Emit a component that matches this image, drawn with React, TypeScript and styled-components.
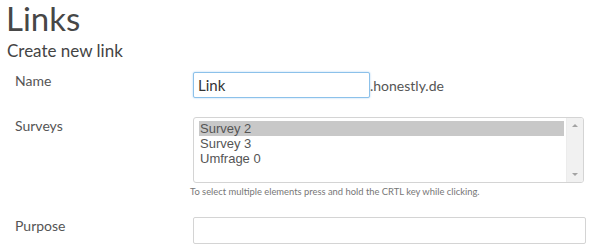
import styled, { createGlobalStyle } from 'styled-components';

const GlobalStyle = createGlobalStyle`
  html, body {
    margin: 0;
    padding: 0;
    background: #ffffff;
  }
  body {
    font-family: Lato, 'Open Sans', sans-serif;
    color: #555555;
  }
`;

const surveys = [
  { id: 2, name: 'Survey 2', selected: true },
  { id: 3, name: 'Survey 3', selected: false },
  { id: 0, name: 'Umfrage 0', selected: false },
];

const App = () => {
  return (
    <>
      <GlobalStyle />
      <Page>
        <Title>Links</Title>
        <Subtitle>Create new link</Subtitle>
        <Form>
          <Label>Name</Label>
          <Field>
            <NameInput defaultValue="Link" />
            <Domain>.honestly.de</Domain>
          </Field>

          <Label>Surveys</Label>
          <Field $column>
            <ListBox>
              <Options>
                {surveys.map((s) => (
                  <Option key={s.id} $selected={s.selected}>
                    {s.name}
                  </Option>
                ))}
              </Options>
              <Scrollbar>
                <Arrow $up />
                <Arrow />
              </Scrollbar>
            </ListBox>
            <Help>To select multiple elements press and hold the CRTL key while clicking.</Help>
          </Field>

          <Label>Purpose</Label>
          <Field>
            <PurposeInput />
          </Field>
        </Form>
      </Page>
    </>
  );
};

export default App;

const Page = styled.div`
  padding: 0 0 0 6px;
  height: 250px;
  overflow: hidden;
`;
const Title = styled.h1`
  margin: 0;
  font-family: Lato, sans-serif;
  font-size: 33px;
  line-height: 36px;
  font-weight: 400;
  color: #474747;
`;
const Subtitle = styled.h2`
  margin: 5px 0 0 1px;
  font-family: Lato, sans-serif;
  font-size: 17px;
  line-height: 20px;
  font-weight: 400;
  color: #444444;
`;
const Form = styled.div`
  display: grid;
  grid-template-columns: 178px 1fr;
  row-gap: 19px;
  margin-top: 11px;
  padding-left: 9px;
`;
const Label = styled.div`
  font-size: 14px;
  line-height: 17px;
  color: #555555;
`;
const Field = styled.div<{ $column?: boolean }>`
  display: flex;
  flex-direction: ${(p) => (p.$column ? 'column' : 'row')};
  align-items: ${(p) => (p.$column ? 'flex-start' : 'center')};
`;
const NameInput = styled.input`
  box-sizing: border-box;
  width: 177px;
  height: 26px;
  padding: 0 4px;
  border: 1px solid #8cc1ea;
  border-radius: 2px;
  box-shadow: 0 0 2px rgba(102, 175, 233, 0.6);
  outline: none;
  font-family: Lato, sans-serif;
  font-size: 15px;
  line-height: 18px;
  color: #333333;
`;
const Domain = styled.span`
  font-size: 14px;
  line-height: 17px;
  color: #555555;
`;
const ListBox = styled.div`
  box-sizing: border-box;
  display: flex;
  width: 391px;
  height: 66px;
  border: 1px solid #d4d4d4;
  border-radius: 3px;
  overflow: hidden;
`;
const Options = styled.div`
  flex: 1;
  padding: 3px 2px 0 5px;
`;
const Option = styled.div<{ $selected?: boolean }>`
  font-family: 'Liberation Sans', Arial, sans-serif;
  font-size: 13px;
  line-height: 15px;
  padding-left: 1px;
  color: #555555;
  background: ${(p) => (p.$selected ? '#c8c8c8' : 'transparent')};
`;
const Scrollbar = styled.div`
  width: 16px;
  background: #f1f1f1;
  border-left: 1px solid #ececec;
  display: flex;
  flex-direction: column;
  justify-content: space-between;
  align-items: center;
  padding: 6px 0;
`;
const Arrow = styled.div<{ $up?: boolean }>`
  width: 0;
  height: 0;
  border-left: 3px solid transparent;
  border-right: 3px solid transparent;
  ${(p) => (p.$up ? 'border-bottom: 3px solid #a3a3a3;' : 'border-top: 3px solid #a3a3a3;')}
`;
const Help = styled.div`
  margin: 3px 0 0 -3px;
  font-size: 9.4px;
  line-height: 12px;
  color: #777777;
`;
const PurposeInput = styled.input`
  box-sizing: border-box;
  width: 393px;
  height: 27px;
  border: 1px solid #d4d4d4;
  border-radius: 2px;
  outline: none;
`;
